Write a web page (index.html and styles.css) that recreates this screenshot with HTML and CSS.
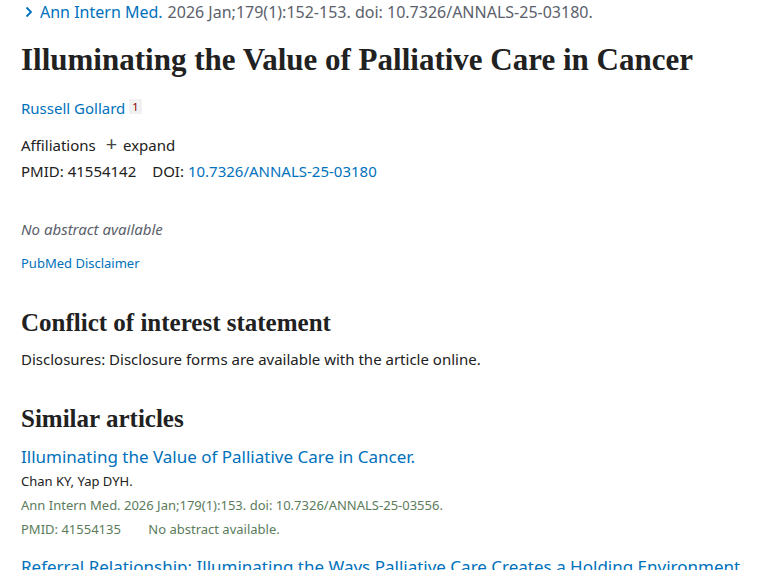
FILE: index.html
```html
<!DOCTYPE html>
<html>
<head>
<meta charset="utf-8">
<link rel="stylesheet" href="styles.css">
</head>
<body>
<main class="page">
  <div class="crumb">
    <svg class="chev" width="10" height="12" viewBox="0 0 10 12"><path d="M2.5 1.5 L7 6 L2.5 10.5" fill="none" stroke="#0071bc" stroke-width="1.8"/></svg>
    <a class="link">Ann Intern Med.</a> <span class="cit">2026 Jan;179(1):152-153. doi: 10.7326/ANNALS-25-03180.</span>
  </div>
  <h1 class="title">Illuminating the Value of Palliative Care in Cancer</h1>
  <div class="authors"><a class="link">Russell Gollard</a> <sup class="aff-num">1</sup></div>
  <div class="affil">Affiliations <span class="plus">+</span> expand</div>
  <div class="ids">PMID: 41554142 <span class="doi-label">DOI:</span> <a class="link">10.7326/ANNALS-25-03180</a></div>
  <p class="noabs">No abstract available</p>
  <a class="link disclaimer">PubMed Disclaimer</a>
  <h2 class="sec">Conflict of interest statement</h2>
  <p class="disc">Disclosures: Disclosure forms are available with the article online.</p>
  <h2 class="sec sim">Similar articles</h2>
  <div class="docsum">
    <a class="link ds-title">Illuminating the Value of Palliative Care in Cancer.</a>
    <div class="ds-auth">Chan KY, Yap DYH.</div>
    <div class="ds-cit">Ann Intern Med. 2026 Jan;179(1):153. doi: 10.7326/ANNALS-25-03556.</div>
    <div class="ds-cit">PMID: 41554135 <span class="ds-noabs">No abstract available.</span></div>
  </div>
  <div class="docsum">
    <a class="link ds-title">Referral Relationship: Illuminating the Ways Palliative Care Creates a Holding Environment.</a>
  </div>
</main>
</body>
</html>
```
FILE: styles.css
```css
html, body { margin: 0; padding: 0; background: #fff; }
body { font-family: "Noto Sans", "Open Sans", sans-serif; color: #212121; font-size: 15px; overflow: hidden; }
.page { padding: 0 0 0 21px; }
.link { color: #0071bc; text-decoration: none; }
.crumb { font-size: 16px; height: 24px; line-height: 24px; display: flex; align-items: center; white-space: nowrap; }
.crumb .chev { margin: 0 6px 0 3px; }
.crumb .cit { color: #5b616b; margin-left: 5px; }
.title { font-family: "Liberation Serif", serif; font-weight: bold; font-size: 31px; line-height: 36px; margin: 18px 0 0; color: #212121; }
.authors { margin-top: 20px; line-height: 20px; }
.aff-num { background: #f1f1f1; color: #8b0000; font-size: 11px; padding: 0 3px; position: relative; top: -3px; vertical-align: baseline; }
.affil { margin-top: 14px; line-height: 20px; }
.plus { font-size: 20px; margin: 0 2px 0 6px; color: #444; }
.ids { margin-top: 6px; line-height: 20px; }
.doi-label { margin-left: 12px; }
.noabs { font-style: italic; color: #5b616b; margin: 38px 0 0; line-height: 20px; }
.disclaimer { display: block; font-size: 13px; margin-top: 14px; line-height: 20px; }
.sec { font-family: "Liberation Serif", serif; font-weight: bold; font-size: 25px; line-height: 28px; margin: 36px 0 0; color: #212121; }
.disc { margin: 12px 0 0; line-height: 20px; }
.sim { margin-top: 36px; }
.docsum { margin-top: 12px; }
.ds-title { display: block; font-size: 17px; line-height: 24px; white-space: nowrap; }
.ds-auth { font-size: 13px; line-height: 24px; color: #212121; }
.ds-cit { font-size: 13px; line-height: 24px; color: #5b7b5b; }
.ds-noabs { margin-left: 24px; }
.docsum + .docsum { margin-top: 14px; }
```
